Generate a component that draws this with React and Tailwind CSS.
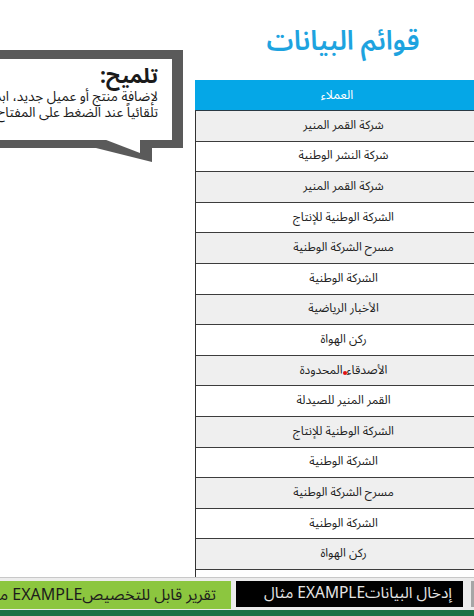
import React from "react";

const rows = [
  "شركة القمر المنير",
  "شركة النشر الوطنية",
  "شركة القمر المنير",
  "الشركة الوطنية للإنتاج",
  "مسرح الشركة الوطنية",
  "الشركة الوطنية",
  "الأخبار الرياضية",
  "ركن الهواة",
  "DOT",
  "القمر المنير للصيدلة",
  "الشركة الوطنية للإنتاج",
  "الشركة الوطنية",
  "مسرح الشركة الوطنية",
  "الشركة الوطنية",
  "ركن الهواة",
];

const font = { fontFamily: '"Noto Sans Arabic", "Noto Naskh Arabic", "DejaVu Sans", "Liberation Sans", sans-serif' };

export default function App() {
  return (
    <div dir="rtl" style={font} className="w-[474px] h-[616px] overflow-hidden bg-white flex flex-col">
      <div className="h-[577px] flex mr-[-17px] overflow-hidden">
        {/* right column: title + table */}
        <div className="w-[296px] shrink-0 flex flex-col">
          <div className="h-[80px] flex items-center justify-center pt-[2px]">
            <span className="text-[27px] text-[#1ea3df] font-semibold leading-none">قوائم البيانات</span>
          </div>
          <div className="h-[31px] bg-[#05a7e7] border-b border-[#2a3a44] flex items-center justify-center text-white text-[12.5px] pr-[12px]">
            العملاء
          </div>
          <div className="border-l border-[#333333] flex-1">
            {rows.map((r, i) => (
              <div
                key={i}
                className={
                  "h-[30.6px] border-b border-[#3c3c3c] flex items-center justify-center text-[12px] text-[#222]" +
                  (i % 2 === 0 ? " bg-[#efefef]" : " bg-white")
                }
              >
                {r === "DOT" ? (
                  <span className="flex items-center">
                    الأصدقاء
                    <span className="inline-block w-[4px] h-[4px] rounded-full bg-[#e01010] mt-[4px]" />
                    المحدودة
                  </span>
                ) : (
                  r
                )}
              </div>
            ))}
          </div>
        </div>
        {/* left column: callout */}
        <div className="flex-1 pt-[50px] pr-[12px]">
          <div className="bg-white border-[#5a5a5a] border-t-[9px] border-r-[11px] border-b-[8px] h-[98px] overflow-hidden">
            <div className="pr-[14px] pt-[4px] text-[#1a1a1a] whitespace-nowrap">
              <div className="text-[21px] font-bold leading-[26px]">تلميح:</div>
              <div className="text-[13.5px] leading-[16px]">لإضافة منتج أو عميل جديد، ابدأ الكتابة في الصف الفارغ الأول وسيتم توسيع الجدول</div>
              <div className="text-[13.5px] leading-[16px]">تلقائياً عند الضغط على المفتاح Enter في لوحة المفاتيح</div>
            </div>
          </div>
          <svg className="block mt-[-10px] mr-[27px]" width="60" height="26" viewBox="0 0 60 26">
            <polygon points="0,2 56,2 56,24 0,10" fill="#5a5a5a" />
            <polygon points="5,0 44,0 44,15" fill="#ffffff" />
          </svg>
        </div>
      </div>
      {/* sheet tabs */}
      <div className="h-[33px] bg-[#ececec] border-t border-[#c8c8c8] flex items-start pt-[3px] gap-[5px]">
        <div className="w-[6px] h-[26px] bg-[#a6a6a6] border-l-[3px] border-[#ececec] shrink-0" />
        <div className="w-[227px] h-[26px] bg-black text-[#e4e4e4] text-[15.5px] flex items-center pr-[11px] shrink-0 whitespace-nowrap">
          إدخال البياناتEXAMPLE مثال
        </div>
        <div className="flex-1 h-[28px] bg-[#8cc63f] text-[#1c1c1c] text-[16px] flex items-center pr-[15px] whitespace-nowrap overflow-hidden">
          تقرير قابل للتخصيصEXAMPLE مثال
        </div>
      </div>
      <div className="h-[6px] bg-[#1f7145]" />
    </div>
  );
}
